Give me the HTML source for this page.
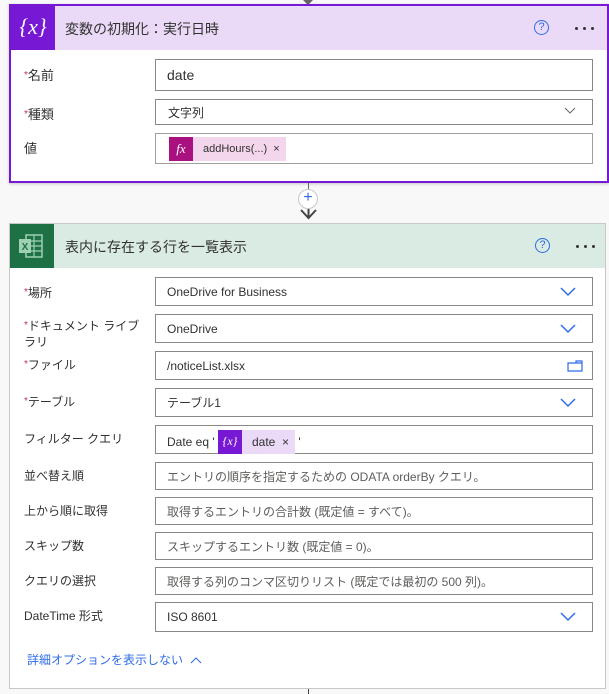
<!DOCTYPE html><html><head><meta charset="utf-8"><style>
*{box-sizing:border-box;margin:0;padding:0}
body{width:609px;height:694px;background:#f8f8f8;font-family:"Liberation Sans","Noto Sans CJK JP",sans-serif;position:relative;overflow:hidden;color:#323130}
.a{position:absolute}
.lbl{position:absolute;left:24px;font-size:13px;color:#323130}
.lbl b{color:#c4314b;font-weight:normal;font-size:10px;vertical-align:2px}
.in{position:absolute;left:155px;width:438px;border:1px solid #8a8886;background:#fff;font-size:12px;padding-left:11px;display:flex;align-items:center}
.ph{color:#605e5c}
.chev{position:absolute;right:16px;top:50%;margin-top:-5px}
.dots{position:absolute;width:30px;height:4px;display:flex;gap:5px}
.dots i{display:block;width:3px;height:3px;border-radius:50%;background:#333}
</style></head><body>
<div class="a" style="left:303px;top:0;width:10px;height:5px;background:#666;clip-path:polygon(0 0,100% 0,50% 100%)"></div>
<!-- card 1 -->
<div class="a" style="left:9px;top:4px;width:600px;height:179px;border:2px solid #7719d4;background:#fff;box-shadow:0 1px 3px rgba(0,0,0,.2)"></div>
<div class="a" style="left:11px;top:6px;width:596px;height:44px;background:#ebdaf7"></div>
<div class="a" style="left:11px;top:6px;width:44px;height:44px;background:#7719d4;color:#fff;font-family:'Liberation Serif',serif;font-size:22px;text-align:center;line-height:42px"><i>{x}</i></div>
<div class="a" style="left:65px;top:19px;font-size:14px">変数の初期化：実行日時</div>
<div class="a" style="left:534px;top:20px;width:15px;height:15px;border:1px solid #2f6ce6;border-radius:50%;color:#2f6ce6;font-size:11px;text-align:center;line-height:13px">?</div>
<div class="dots" style="left:575px;top:27px"><i></i><i></i><i></i></div>
<div class="lbl" style="top:65px"><b>*</b>名前</div>
<div class="in" style="top:59px;height:32px;font-size:14px">date</div>
<div class="lbl" style="top:104px"><b>*</b>種類</div>
<div class="in" style="top:99px;height:26px;padding-left:12px;font-size:12px">文字列<svg class="chev" width="12" height="8" viewBox="0 0 12 8"><path d="M1 1l5 5 5-5" stroke="#666" fill="none"/></svg></div>
<div class="lbl" style="top:138px">値</div>
<div class="in" style="top:133px;height:31px;border-color:#a19f9d;padding-left:13px"><span style="display:inline-flex;height:24px;background:#f3d6ec;align-items:center"><span style="width:24px;height:24px;background:#a8117f;color:#fff;font-family:'Liberation Serif',serif;font-style:italic;font-size:13px;text-align:center;line-height:24px">fx</span><span style="padding:0 6px 0 10px;font-size:11px">addHours(...)&nbsp;&nbsp;×</span></span></div>
<!-- connector -->
<div class="a" style="left:308px;top:183px;width:1px;height:8px;background:#666"></div>
<div class="a" style="left:298px;top:189px;width:20px;height:20px;border:1.5px solid #c8c8c8;border-radius:50%;background:#fff;color:#2f6ce6;text-align:center;line-height:16px;font-size:16px">+</div>
<svg class="a" style="left:300px;top:209px" width="17" height="12" viewBox="0 0 17 12"><path d="M1 1l7.5 8L16 1M8.5 0v9" stroke="#444" stroke-width="2" fill="none"/></svg>
<!-- card 2 -->
<div class="a" style="left:9px;top:223px;width:597px;height:466px;border:1px solid #c8c8c8;background:#fff"></div>
<div class="a" style="left:10px;top:224px;width:595px;height:44px;background:#d9ebe3"></div>
<div class="a" style="left:10px;top:224px;width:44px;height:44px;background:#1e7145"></div>
<svg class="a" style="left:17px;top:232px" width="28" height="28" viewBox="0 0 28 28"><rect x="9" y="3" width="16" height="22" fill="none" stroke="#9fd0b4" stroke-width="1.5"/><path d="M9 9h16M9 14h16M9 19h16M17 3v22" stroke="#9fd0b4" stroke-width="1.2"/><rect x="2" y="7" width="12" height="14" fill="#9fd0b4"/><text x="8" y="18" font-size="10" font-family="Liberation Sans" font-weight="bold" fill="#1e7145" text-anchor="middle">X</text></svg>
<div class="a" style="left:65px;top:237px;font-size:14px">表内に存在する行を一覧表示</div>
<div class="a" style="left:535px;top:238px;width:15px;height:15px;border:1px solid #2f6ce6;border-radius:50%;color:#2f6ce6;font-size:11px;text-align:center;line-height:13px">?</div>
<div class="dots" style="left:576px;top:245px"><i></i><i></i><i></i></div>

<div class="lbl" style="top:284px;font-size:12px"><b>*</b>場所</div>
<div class="in" style="top:277px;height:29px">OneDrive for Business<svg class="chev" width="16" height="10" viewBox="0 0 16 10"><path d="M1 1l7 7 7-7" stroke="#2f6ce6" stroke-width="1.5" fill="none"/></svg></div>
<div class="lbl" style="top:318px;font-size:12px;line-height:16px"><b>*</b>ドキュメント ライブ<br>ラリ</div>
<div class="in" style="top:314px;height:29px">OneDrive<svg class="chev" width="16" height="10" viewBox="0 0 16 10"><path d="M1 1l7 7 7-7" stroke="#2f6ce6" stroke-width="1.5" fill="none"/></svg></div>
<div class="lbl" style="top:356px;font-size:12px"><b>*</b>ファイル</div>
<div class="in" style="top:351px;height:29px">/noticeList.xlsx<svg class="chev" style="right:9px;margin-top:-6px" width="16" height="12" viewBox="0 0 16 12"><path d="M1 3h14v8H1zM9 3V1h6v2" stroke="#2f6ce6" stroke-width="1.2" fill="none"/></svg></div>
<div class="lbl" style="top:393px;font-size:12px"><b>*</b>テーブル</div>
<div class="in" style="top:388px;height:29px">テーブル1<svg class="chev" width="16" height="10" viewBox="0 0 16 10"><path d="M1 1l7 7 7-7" stroke="#2f6ce6" stroke-width="1.5" fill="none"/></svg></div>
<div class="lbl" style="top:430px;font-size:12px">フィルター クエリ</div>
<div class="in" style="top:425px;height:29px;font-size:12px;padding-top:4px">Date eq '&nbsp;<span style="display:inline-flex;height:24px;background:#ebdaf7;align-items:center"><span style="width:24px;height:24px;background:#7719d4;color:#fff;font-family:'Liberation Serif',serif;font-style:italic;font-size:12px;text-align:center;line-height:22px">{x}</span><span style="padding:0 6px 0 10px;font-size:12px">date&nbsp;&nbsp;×</span></span>&nbsp;'</div>
<div class="lbl" style="top:467px;font-size:12px">並べ替え順</div>
<div class="in" style="top:462px;height:28px"><span class="ph">エントリの順序を指定するための ODATA orderBy クエリ。</span></div>
<div class="lbl" style="top:502px;font-size:12px">上から順に取得</div>
<div class="in" style="top:497px;height:28px"><span class="ph">取得するエントリの合計数 (既定値 = すべて)。</span></div>
<div class="lbl" style="top:537px;font-size:12px">スキップ数</div>
<div class="in" style="top:532px;height:28px"><span class="ph">スキップするエントリ数 (既定値 = 0)。</span></div>
<div class="lbl" style="top:572px;font-size:12px">クエリの選択</div>
<div class="in" style="top:567px;height:28px"><span class="ph">取得する列のコンマ区切りリスト (既定では最初の 500 列)。</span></div>
<div class="lbl" style="top:607px;font-size:12px">DateTime 形式</div>
<div class="in" style="top:602px;height:30px">ISO 8601<svg class="chev" width="16" height="10" viewBox="0 0 16 10"><path d="M1 1l7 7 7-7" stroke="#2f6ce6" stroke-width="1.5" fill="none"/></svg></div>
<div class="a" style="left:27px;top:651px;font-size:12px;color:#2f6ce6">詳細オプションを表示しない&nbsp;&nbsp;<svg width="12" height="8" viewBox="0 0 12 8"><path d="M1 7l5-5 5 5" stroke="#2f6ce6" fill="none"/></svg></div>
<div class="a" style="left:308px;top:689px;width:1px;height:5px;background:#444"></div>
</body></html>
